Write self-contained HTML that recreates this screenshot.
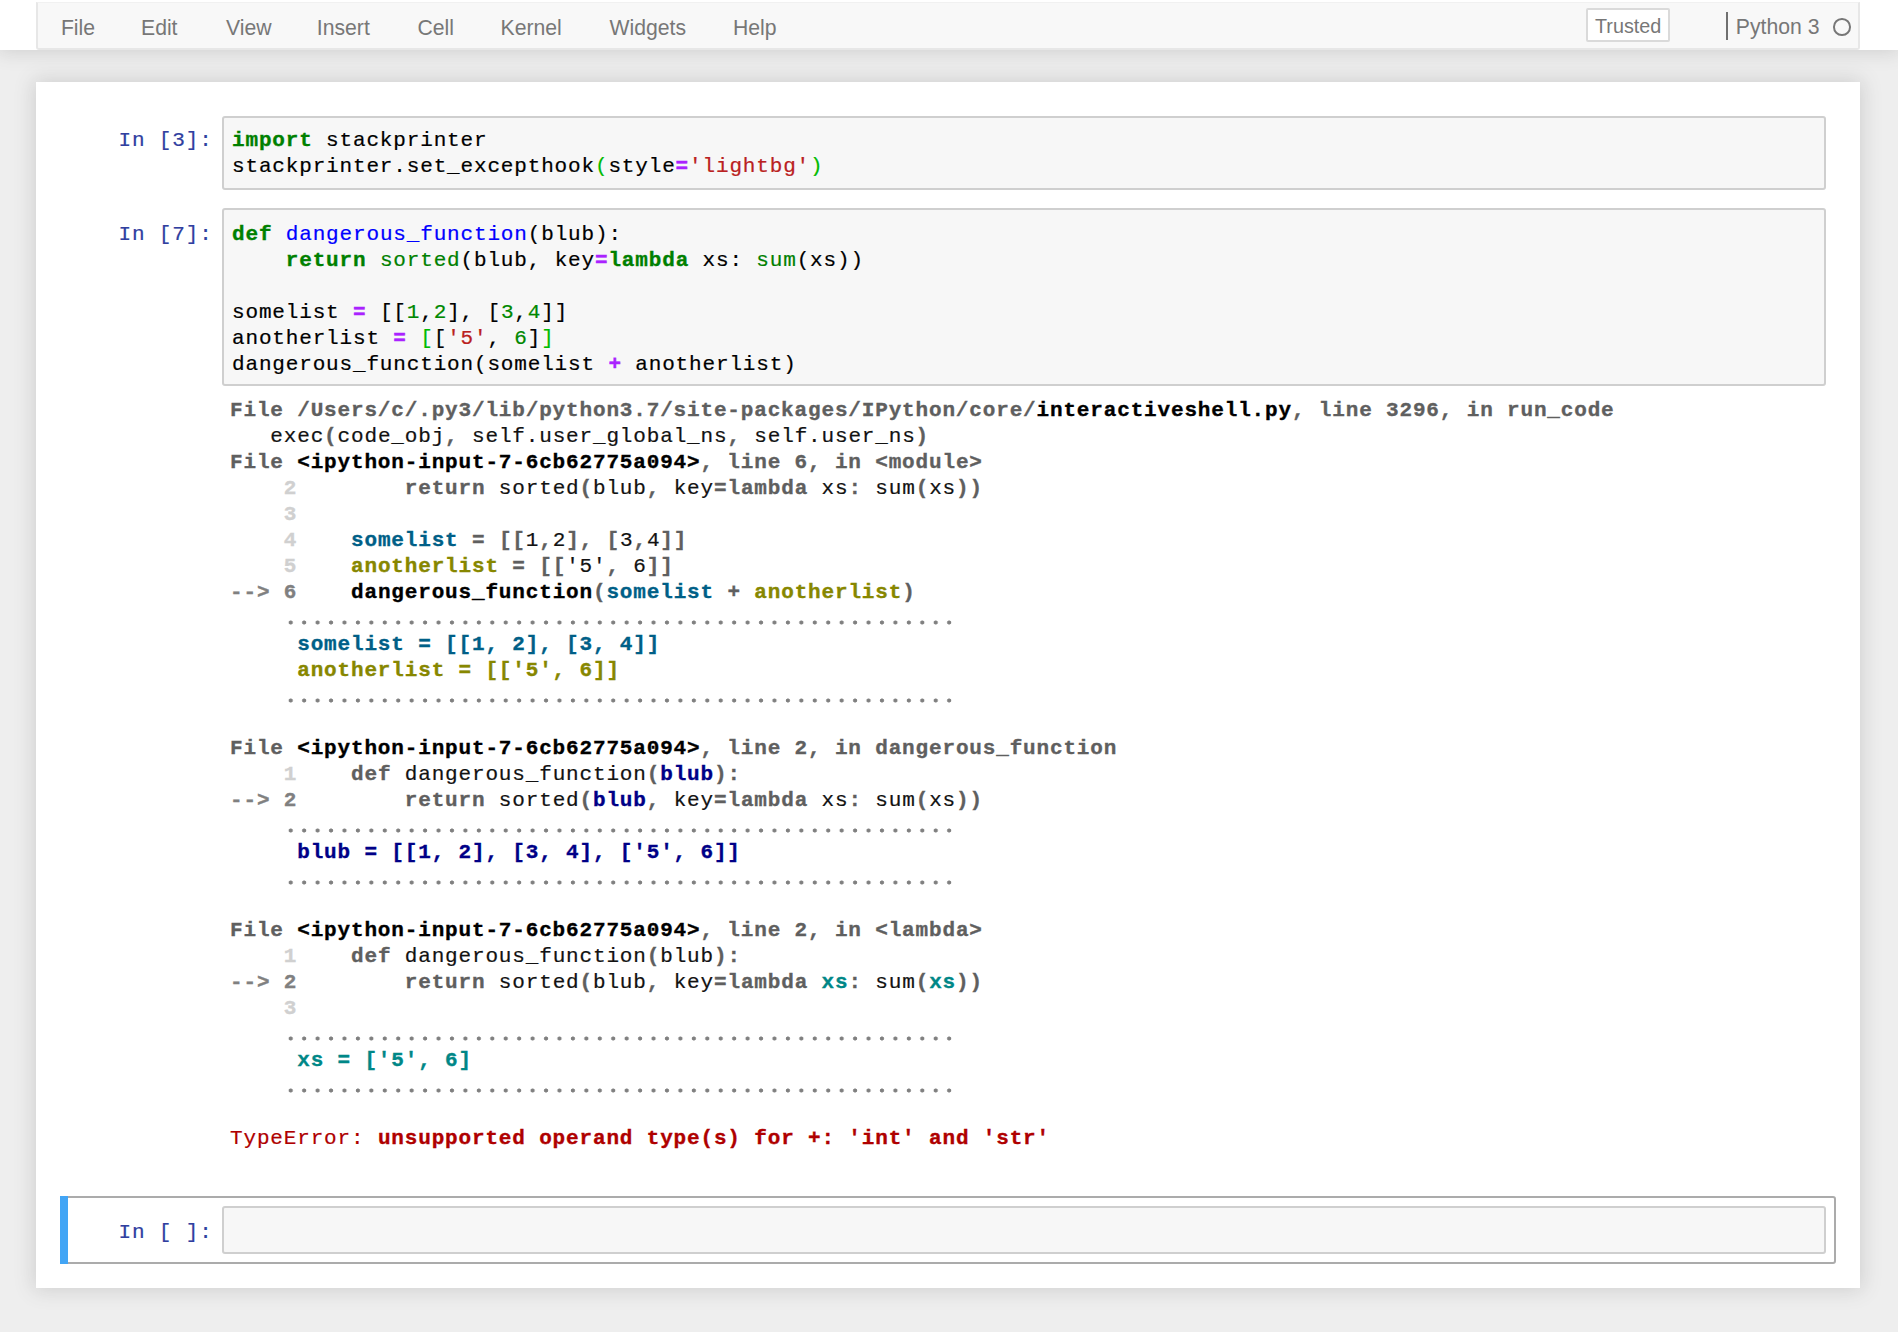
<!DOCTYPE html>
<html><head><meta charset="utf-8">
<style>
html,body{margin:0;padding:0;}
body{width:1898px;height:1332px;background:#eeeeee;position:relative;overflow:hidden;font-family:"Liberation Sans",sans-serif;}
#header{position:absolute;left:0;top:0;width:1898px;height:50px;background:#fff;box-shadow:0 0 19px 2px rgba(87,87,87,0.2);z-index:3;}
#menubar{position:absolute;left:36px;top:2px;width:1820px;height:44.5px;background:#f8f8f8;border:2px solid #e7e7e7;border-top:1px solid #f1f1f1;border-radius:0 0 3px 3px;}
.mi{position:absolute;font-size:21.2px;color:#777;line-height:26px;white-space:nowrap;}
#container{position:absolute;left:36px;top:82px;width:1824px;height:1206px;background:#fff;box-shadow:0 0 19px 2px rgba(87,87,87,0.2);z-index:1;}
#layer{position:absolute;left:0;top:0;width:1898px;height:1332px;z-index:4;}
.prompt{-webkit-text-stroke:0.2px currentColor;position:absolute;font-family:"Liberation Mono",monospace;font-size:21px;letter-spacing:0.840px;color:#303F9F;line-height:26px;white-space:pre;margin:0;}
.ibox{position:absolute;left:222px;width:1600px;background:#f7f7f7;border:2px solid #cfcfcf;border-radius:3px;}
pre b,pre .g,pre .bk,pre .ln,pre .ar,pre .kw,pre .v1,pre .v2,pre .v3,pre .v4,pre .pu,pre .eb,pre .k,pre .o{-webkit-text-stroke:0.35px currentColor;}
pre{-webkit-text-stroke:0.2px currentColor;margin:0;font-family:"Liberation Mono",monospace;font-size:21px;letter-spacing:0.840px;line-height:26px;white-space:pre;position:absolute;color:#000;}
.k{color:#008000;font-weight:bold}
.d{color:#0000ff}
.b{color:#008000}
.o{color:#AA22FF;font-weight:bold}
.n{color:#008800}
.s{color:#BA2121}
.mb{color:#00bb00}
.g{color:#5f5f5f;font-weight:bold}
.bk{color:#000;font-weight:bold}
.df{color:#121212}
.pu{color:#5f5f5f;font-weight:bold}
.ln{color:#d0d0d0;font-weight:bold}
.ar{color:#808080;font-weight:bold}
.kw{color:#5f5f5f;font-weight:bold}
.v1{color:#005f87;font-weight:bold}
.v2{color:#878700;font-weight:bold}
.v3{color:#000087;font-weight:bold}
.v4{color:#008787;font-weight:bold}
.dt{color:#808080;font-weight:bold}
.dots{position:absolute;left:283.76px;width:672px;height:13.44px;background:radial-gradient(circle at 6.72px 6.72px, #808080 0, #808080 1.7px, rgba(128,128,128,0) 2.5px);background-size:13.44px 13.44px;background-repeat:repeat-x;}
.er{color:#af0000}
.eb{color:#af0000;font-weight:bold}
#sel{position:absolute;left:60px;top:1196px;width:1772px;height:64px;border:2px solid #ababab;border-radius:3px;}
#selbar{position:absolute;left:60px;top:1196px;width:8px;height:68px;background:#42A5F5;}
#trusted{position:absolute;left:1586px;top:8px;width:80px;height:30px;border:2px solid #dadada;border-radius:2px;background:#fff;}
</style></head><body>
<div id="header">
  <div id="menubar"></div>
</div>
<div id="container"></div>
<div id="layer">
<span class="mi" style="left:60.90px;top:14.65px">File</span>
<span class="mi" style="left:141.00px;top:14.65px">Edit</span>
<span class="mi" style="left:226.00px;top:14.65px">View</span>
<span class="mi" style="left:316.79px;top:14.65px">Insert</span>
<span class="mi" style="left:417.44px;top:14.65px">Cell</span>
<span class="mi" style="left:500.50px;top:14.65px">Kernel</span>
<span class="mi" style="left:609.49px;top:14.65px">Widgets</span>
<span class="mi" style="left:733.00px;top:14.65px">Help</span>
<div id="trusted"></div>
<span class="mi" style="left:1595px;top:12.54px;font-size:19.8px">Trusted</span>
<div style="position:absolute;left:1726px;top:12px;width:2px;height:28px;background:#707070"></div>
<span class="mi" style="left:1735.8px;top:13.95px">Python 3</span>
<div style="position:absolute;left:1833.2px;top:18.1px;width:13.6px;height:13.6px;border:2.4px solid #777;border-radius:50%"></div>

<div class="prompt" style="left:118.5px;top:128.01px">In [3]:</div>
<div class="ibox" style="top:116px;height:69.5px;"></div>
<pre style="left:232px;top:128.01px"><span class="k">import</span> stackprinter
stackprinter.set_excepthook<span class="mb">(</span>style<span class="o">=</span><span class="s">'lightbg'</span><span class="mb">)</span></pre>

<div class="prompt" style="left:118.5px;top:222.21px">In [7]:</div>
<div class="ibox" style="top:208px;height:173.6px;"></div>
<pre style="left:232px;top:222.21px"><span class="k">def</span> <span class="d">dangerous_function</span>(blub):
    <span class="k">return</span> <span class="b">sorted</span>(blub, key<span class="o">=</span><span class="k">lambda</span> xs: <span class="b">sum</span>(xs))

somelist <span class="o">=</span> [[<span class="n">1</span>,<span class="n">2</span>], [<span class="n">3</span>,<span class="n">4</span>]]
anotherlist <span class="o">=</span> <span class="mb">[</span>[<span class="s">'5'</span>, <span class="n">6</span>]<span class="mb">]</span>
dangerous_function(somelist <span class="o">+</span> anotherlist)</pre>

<pre style="left:230px;top:397.81px;color:#121212"><span class="g">File /Users/c/.py3/lib/python3.7/site-packages/IPython/core/</span><span class="bk">interactiveshell.py</span><span class="g">, line 3296, in run_code</span>
   exec<span class="pu">(</span>code_obj<span class="pu">,</span> self.user_global_ns<span class="pu">,</span> self.user_ns<span class="pu">)</span>
<span class="g">File </span><span class="bk">&lt;ipython-input-7-6cb62775a094&gt;</span><span class="g">, line 6, in &lt;module&gt;</span>
<span class="ln">    2</span>        <span class="kw">return</span> sorted<span class="pu">(</span>blub<span class="pu">,</span> key<span class="pu">=</span><span class="kw">lambda</span> xs<span class="pu">:</span> sum<span class="pu">(</span>xs<span class="pu">)</span><span class="pu">)</span>
<span class="ln">    3</span>
<span class="ln">    4</span>    <span class="v1">somelist</span> <span class="pu">=</span> <span class="pu">[</span><span class="pu">[</span>1<span class="pu">,</span>2<span class="pu">]</span><span class="pu">,</span> <span class="pu">[</span>3<span class="pu">,</span>4<span class="pu">]</span><span class="pu">]</span>
<span class="ln">    5</span>    <span class="v2">anotherlist</span> <span class="pu">=</span> <span class="pu">[</span><span class="pu">[</span>'5'<span class="pu">,</span> 6<span class="pu">]</span><span class="pu">]</span>
<span class="ar">--&gt; 6</span>    <span class="bk">dangerous_function</span><span class="pu">(</span><span class="v1">somelist</span> <span class="pu">+</span> <span class="v2">anotherlist</span><span class="pu">)</span>
<span class="dt">                                                      </span>
<span class="v1">     somelist = [[1, 2], [3, 4]]</span>
<span class="v2">     anotherlist = [['5', 6]]</span>
<span class="dt">                                                      </span>

<span class="g">File </span><span class="bk">&lt;ipython-input-7-6cb62775a094&gt;</span><span class="g">, line 2, in dangerous_function</span>
<span class="ln">    1</span>    <span class="kw">def</span> dangerous_function<span class="pu">(</span><span class="v3">blub</span><span class="pu">)</span><span class="pu">:</span>
<span class="ar">--&gt; 2</span>        <span class="kw">return</span> sorted<span class="pu">(</span><span class="v3">blub</span><span class="pu">,</span> key<span class="pu">=</span><span class="kw">lambda</span> xs<span class="pu">:</span> sum<span class="pu">(</span>xs<span class="pu">)</span><span class="pu">)</span>
<span class="dt">                                                      </span>
<span class="v3">     blub = [[1, 2], [3, 4], ['5', 6]]</span>
<span class="dt">                                                      </span>

<span class="g">File </span><span class="bk">&lt;ipython-input-7-6cb62775a094&gt;</span><span class="g">, line 2, in &lt;lambda&gt;</span>
<span class="ln">    1</span>    <span class="kw">def</span> dangerous_function<span class="pu">(</span>blub<span class="pu">)</span><span class="pu">:</span>
<span class="ar">--&gt; 2</span>        <span class="kw">return</span> sorted<span class="pu">(</span>blub<span class="pu">,</span> key<span class="pu">=</span><span class="kw">lambda</span> <span class="v4">xs</span><span class="pu">:</span> sum<span class="pu">(</span><span class="v4">xs</span><span class="pu">)</span><span class="pu">)</span>
<span class="ln">    3</span>
<span class="dt">                                                      </span>
<span class="v4">     xs = ['5', 6]</span>
<span class="dt">                                                      </span>

<span class="er">TypeError: </span><span class="eb">unsupported operand type(s) for +: 'int' and 'str'</span></pre>

<div class="dots" style="top:615.68px"></div>
<div class="dots" style="top:693.68px"></div>
<div class="dots" style="top:823.68px"></div>
<div class="dots" style="top:875.68px"></div>
<div class="dots" style="top:1031.68px"></div>
<div class="dots" style="top:1083.68px"></div>
<div id="sel"></div>
<div id="selbar"></div>
<div class="prompt" style="left:118.5px;top:1219.81px">In [ ]:</div>
<div class="ibox" style="top:1206px;height:43.5px;"></div>
</div>
</body></html>
